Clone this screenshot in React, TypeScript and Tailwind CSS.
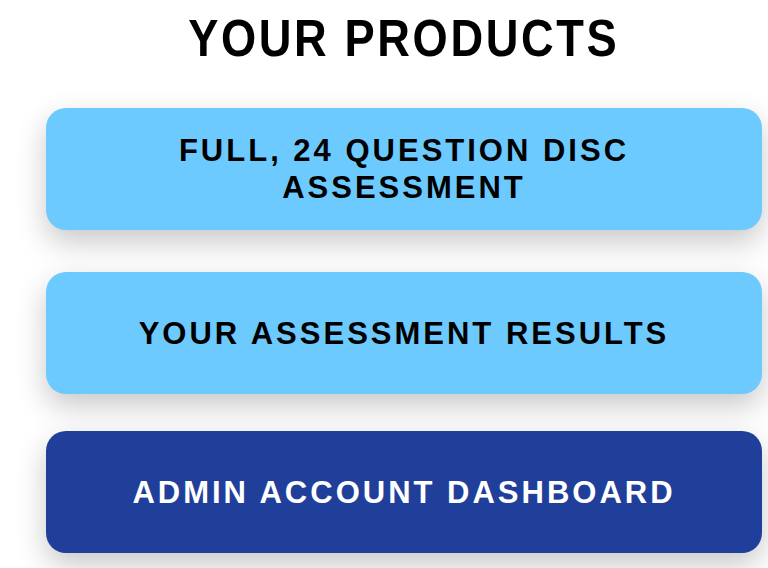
const buttons = [
  { label: 'FULL, 24 QUESTION DISC ASSESSMENT', tone: 'light', gap: 'mt-[42px]' },
  { label: 'YOUR ASSESSMENT RESULTS', tone: 'light', gap: 'mt-[42px]' },
  { label: 'ADMIN ACCOUNT DASHBOARD', tone: 'dark', gap: 'mt-[37px]' },
];

export default function App() {
  return (
    <div className="min-h-[568px] w-[768px] overflow-hidden bg-white font-['Liberation_Sans',Arial,sans-serif]">
      <div className="ml-[46px] w-[716px] pt-[13px]">
        {/* condensed heading: no narrow face installed, so squeeze the glyphs */}
        <h1 className="text-center text-[52px] font-bold leading-[51px] text-black">
          <span className="inline-block scale-x-[0.87] tracking-[3px]">YOUR PRODUCTS</span>
        </h1>
        <div className="mt-[44px] flex flex-col">
          {buttons.map((b, i) => (
            <button
              key={b.label}
              className={
                (i === 0 ? '' : b.gap + ' ') +
                (b.tone === 'light'
                  ? 'bg-[#6dcaff] text-black '
                  : 'bg-[#1f3f9a] text-white ') +
                'flex h-[122px] w-full items-center justify-center rounded-[20px] px-12 text-center text-[31px] font-bold leading-[37px] tracking-[3px] shadow-[0_12px_30px_rgba(0,0,0,0.22)]'
              }
            >
              <span className="max-w-[560px]">{b.label}</span>
            </button>
          ))}
        </div>
      </div>
    </div>
  );
}
